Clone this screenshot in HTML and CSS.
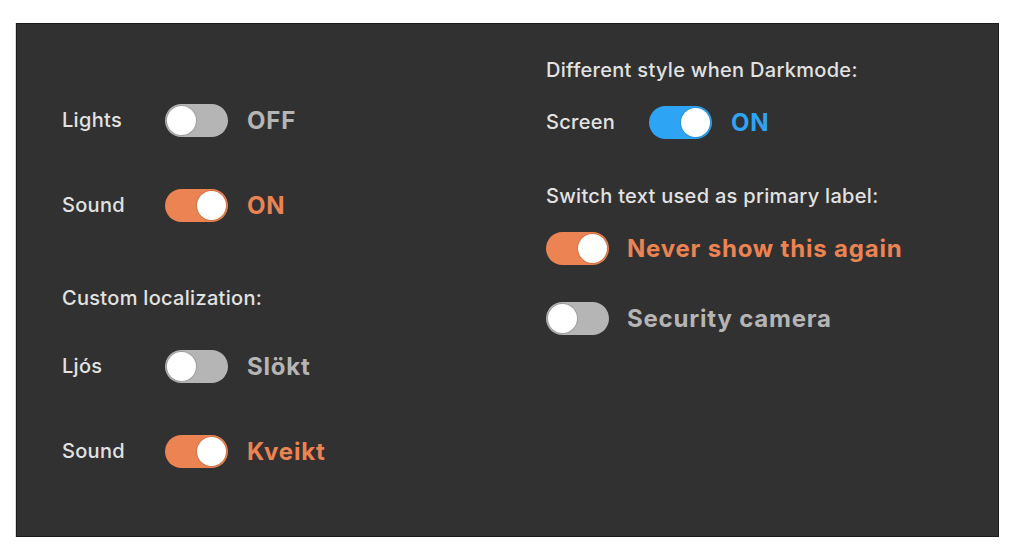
FILE: index.html
```html
<!DOCTYPE html>
<html>
<head>
<meta charset="utf-8">
<link rel="stylesheet" href="styles.css">
</head>
<body>
<div class="panel">
  <div class="col col-left">
    <div class="row r-lights">
      <span class="label">Lights</span>
      <span class="toggle off"><span class="knob"></span></span>
      <span class="value v-off">OFF</span>
    </div>
    <div class="row r-sound">
      <span class="label">Sound</span>
      <span class="toggle on orange"><span class="knob"></span></span>
      <span class="value v-orange">ON</span>
    </div>
    <div class="heading h-custom">Custom localization:</div>
    <div class="row r-ljos">
      <span class="label">Ljós</span>
      <span class="toggle off"><span class="knob"></span></span>
      <span class="value v-off">Slökt</span>
    </div>
    <div class="row r-sound">
      <span class="label">Sound</span>
      <span class="toggle on orange"><span class="knob"></span></span>
      <span class="value v-orange">Kveikt</span>
    </div>
  </div>
  <div class="col col-right">
    <div class="heading h-dark">Different style when Darkmode:</div>
    <div class="row r-screen">
      <span class="label">Screen</span>
      <span class="toggle on blue"><span class="knob"></span></span>
      <span class="value v-blue">ON</span>
    </div>
    <div class="heading h-switch">Switch text used as primary label:</div>
    <div class="row r-never">
      <span class="toggle on orange"><span class="knob"></span></span>
      <span class="value v-orange">Never show this again</span>
    </div>
    <div class="row r-security">
      <span class="toggle off"><span class="knob"></span></span>
      <span class="value v-off">Security camera</span>
    </div>
  </div>
</div>
</body>
</html>
```
FILE: styles.css
```css
html, body {
  margin: 0;
  padding: 0;
  background: #ffffff;
}
body {
  font-family: "Inter", "Liberation Sans", sans-serif;
}
.panel {
  box-sizing: border-box;
  margin: 23px 0 0 16px;
  width: 983px;
  height: 514px;
  background: #313131;
  border: 1px solid #1c1c1c;
  box-shadow: -1px 0 0 #d8d8d8;
  display: flex;
}
.col {
  display: flex;
  flex-direction: column;
}
.col-left {
  width: 529px;
  padding-left: 45px;
  padding-top: 79px;
  box-sizing: border-box;
}
.col-right {
  padding-top: 34px;
}
.row {
  display: flex;
  align-items: center;
  height: 34px;
}
.label {
  width: 103px;
  font-size: 20px;
  font-weight: 500;
  letter-spacing: 0.3px;
  color: #e2e2e2;
}
.heading {
  height: 24px;
  line-height: 24px;
  font-size: 20px;
  font-weight: 500;
  letter-spacing: 0.3px;
  color: #e2e2e2;
}
.toggle {
  position: relative;
  box-sizing: border-box;
  width: 63px;
  height: 33px;
  border-radius: 17px;
  flex: none;
}
.toggle.off { background: #b5b5b5; }
.toggle.orange { background: #ec8352; }
.toggle.blue { background: #2ea4f5; }
.knob {
  position: absolute;
  top: 2px;
  width: 29px;
  height: 29px;
  border-radius: 50%;
  background: #ffffff;
  box-shadow: 0 0 0 1px rgba(0,0,0,0.12);
}
.toggle.off .knob { left: 2px; }
.toggle.on .knob { right: 2px; }
.value {
  margin-left: 19px;
  font-size: 24px;
  font-weight: 700;
  letter-spacing: 0.8px;
}
.col-right .r-never .value,
.col-right .r-security .value { margin-left: 18px; }
.v-off { color: #b5b5b5; }
.v-orange { color: #ec8352; }
.v-blue { color: #2ea4f5; }

.r-sound { margin-top: 51px; }
.h-custom { margin-top: 64px; }
.r-ljos { margin-top: 39px; }

.r-screen { margin-top: 23px; }
.h-switch { margin-top: 45px; }
.r-never { margin-top: 23px; }
.r-security { margin-top: 36px; }
```
